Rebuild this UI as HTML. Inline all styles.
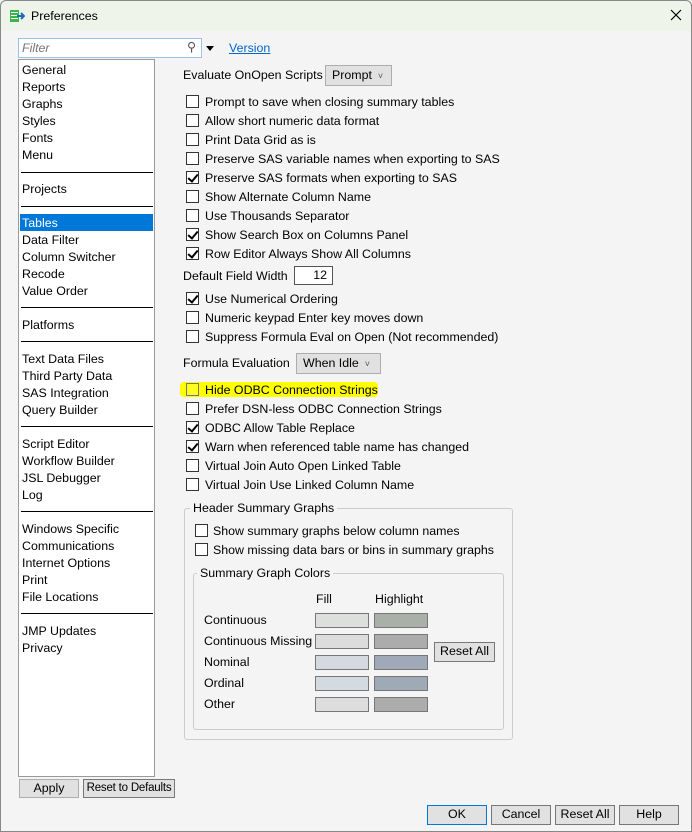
<!DOCTYPE html>
<html><head><style>
*{margin:0;padding:0;box-sizing:border-box}
body{width:692px;height:832px;background:#f4f4f4;font-family:"Liberation Sans",sans-serif;font-size:12.4px;color:#000;position:relative;overflow:hidden}
.a{position:absolute;white-space:nowrap}
.t{position:absolute;white-space:nowrap;line-height:14px}
.cb{position:absolute;width:13px;height:13px;border:1px solid #333;background:#fff}
.cb.c::after{content:"";position:absolute;left:3px;top:0px;width:4px;height:8px;border:solid #000;border-width:0 2px 2px 0;transform:rotate(40deg)}
.btn{position:absolute;background:#e1e1e1;border:1px solid #adadad;text-align:center;line-height:17px;white-space:nowrap;overflow:hidden}
.sep{position:absolute;left:21px;width:132px;height:1px;background:#000}
.sw{position:absolute;width:54px;height:15px;border:1px solid #777}
.grp{position:absolute;border:1px solid #ccc;border-radius:3px}
.lg{position:absolute;background:#f4f4f4;padding:0 3px;line-height:14px;white-space:nowrap}
</style></head><body>
<div class="a" style="left:0;top:0;width:692px;height:31px;background:#eef4ea"></div>
<div class="a" style="left:0;top:0;width:692px;height:832px;border:1px solid #888;border-radius:6px 6px 0 0"></div>
<svg class="a" style="left:9px;top:8px" width="16" height="16"><rect x="1" y="2" width="9" height="12" fill="#3bb54a"/><rect x="2" y="4" width="7" height="1" fill="#fff"/><rect x="2" y="7" width="7" height="1" fill="#fff"/><rect x="2" y="10" width="7" height="1" fill="#fff"/><path d="M8 8 L15 8 M12 5 L15 8 L12 11" stroke="#1a6fb8" stroke-width="2" fill="none"/></svg>
<div class="t" style="left:31px;top:9px">Preferences</div>
<svg class="a" style="left:670px;top:9px" width="12" height="12"><path d="M1 1 L11 11 M11 1 L1 11" stroke="#000" stroke-width="1.2"/></svg>

<div class="a" style="left:18px;top:38px;width:184px;height:20px;background:#fff;border:1px solid #99c4e8"></div>
<div class="t" style="left:22px;top:41px;color:#777;font-style:italic">Filter</div>
<div class="t" style="left:187px;top:40px;color:#555">⚲</div>
<div class="a" style="left:206px;top:46px;border-left:4px solid transparent;border-right:4px solid transparent;border-top:5px solid #000"></div>
<div class="t" style="left:229px;top:41px;color:#0066cc;text-decoration:underline">Version</div>

<div class="a" style="left:18px;top:59px;width:137px;height:718px;background:#fff;border:1px solid #999"></div>
<div class="a" style="left:20px;top:214px;width:133px;height:17px;background:#0078d7"></div>
<div class="t" style="left:22px;top:63px">General</div>
<div class="t" style="left:22px;top:80px">Reports</div>
<div class="t" style="left:22px;top:97px">Graphs</div>
<div class="t" style="left:22px;top:114px">Styles</div>
<div class="t" style="left:22px;top:131px">Fonts</div>
<div class="t" style="left:22px;top:148px">Menu</div>
<div class="sep" style="top:172px"></div>
<div class="t" style="left:22px;top:182px">Projects</div>
<div class="sep" style="top:206px"></div>
<div class="t" style="left:22px;top:216px;color:#fff">Tables</div>
<div class="t" style="left:22px;top:233px">Data Filter</div>
<div class="t" style="left:22px;top:250px">Column Switcher</div>
<div class="t" style="left:22px;top:267px">Recode</div>
<div class="t" style="left:22px;top:284px">Value Order</div>
<div class="sep" style="top:307px"></div>
<div class="t" style="left:22px;top:318px">Platforms</div>
<div class="sep" style="top:341px"></div>
<div class="t" style="left:22px;top:352px">Text Data Files</div>
<div class="t" style="left:22px;top:369px">Third Party Data</div>
<div class="t" style="left:22px;top:386px">SAS Integration</div>
<div class="t" style="left:22px;top:403px">Query Builder</div>
<div class="sep" style="top:426px"></div>
<div class="t" style="left:22px;top:437px">Script Editor</div>
<div class="t" style="left:22px;top:454px">Workflow Builder</div>
<div class="t" style="left:22px;top:471px">JSL Debugger</div>
<div class="t" style="left:22px;top:488px">Log</div>
<div class="sep" style="top:511px"></div>
<div class="t" style="left:22px;top:522px">Windows Specific</div>
<div class="t" style="left:22px;top:539px">Communications</div>
<div class="t" style="left:22px;top:556px">Internet Options</div>
<div class="t" style="left:22px;top:573px">Print</div>
<div class="t" style="left:22px;top:590px">File Locations</div>
<div class="sep" style="top:613px"></div>
<div class="t" style="left:22px;top:624px">JMP Updates</div>
<div class="t" style="left:22px;top:641px">Privacy</div>

<div class="btn" style="left:19px;top:779px;width:60px;height:19px">Apply</div>
<div class="btn" style="left:83px;top:779px;width:92px;height:19px;border-color:#777;font-size:11.5px;letter-spacing:-0.2px">Reset to Defaults</div>

<div class="t" style="left:183px;top:68px">Evaluate OnOpen Scripts</div>
<div class="btn" style="left:325px;top:65px;width:67px;height:21px;text-align:left;padding-left:6px;line-height:19px">Prompt <span style="font-size:9px;color:#555">&nbsp;˅</span></div>

<div class="cb" style="left:186px;top:95px"></div><div class="t" style="left:205px;top:95px">Prompt to save when closing summary tables</div>
<div class="cb" style="left:186px;top:114px"></div><div class="t" style="left:205px;top:114px">Allow short numeric data format</div>
<div class="cb" style="left:186px;top:133px"></div><div class="t" style="left:205px;top:133px">Print Data Grid as is</div>
<div class="cb" style="left:186px;top:152px"></div><div class="t" style="left:205px;top:152px">Preserve SAS variable names when exporting to SAS</div>
<div class="cb c" style="left:186px;top:171px"></div><div class="t" style="left:205px;top:171px">Preserve SAS formats when exporting to SAS</div>
<div class="cb" style="left:186px;top:190px"></div><div class="t" style="left:205px;top:190px">Show Alternate Column Name</div>
<div class="cb" style="left:186px;top:209px"></div><div class="t" style="left:205px;top:209px">Use Thousands Separator</div>
<div class="cb c" style="left:186px;top:228px"></div><div class="t" style="left:205px;top:228px">Show Search Box on Columns Panel</div>
<div class="cb c" style="left:186px;top:247px"></div><div class="t" style="left:205px;top:247px">Row Editor Always Show All Columns</div>

<div class="t" style="left:183px;top:269px">Default Field Width</div>
<div class="a" style="left:294px;top:266px;width:39px;height:19px;background:#fff;border:1px solid #555;text-align:right;padding-right:5px;line-height:17px">12</div>

<div class="cb c" style="left:186px;top:292px"></div><div class="t" style="left:205px;top:292px">Use Numerical Ordering</div>
<div class="cb" style="left:186px;top:311px"></div><div class="t" style="left:205px;top:311px">Numeric keypad Enter key moves down</div>
<div class="cb" style="left:186px;top:330px"></div><div class="t" style="left:205px;top:330px">Suppress Formula Eval on Open (Not recommended)</div>

<div class="t" style="left:183px;top:356px">Formula Evaluation</div>
<div class="btn" style="left:296px;top:353px;width:85px;height:21px;text-align:left;padding-left:6px;line-height:19px">When Idle <span style="font-size:9px;color:#555">&nbsp;˅</span></div>

<div class="a" style="left:180px;top:382px;width:198px;height:15px;background:#ffff00;border-radius:4px"></div>
<div class="cb" style="left:186px;top:383px;background:#ffff20;border-color:#777"></div><div class="t" style="left:205px;top:383px">Hide ODBC Connection Strings</div>
<div class="cb" style="left:186px;top:402px"></div><div class="t" style="left:205px;top:402px">Prefer DSN-less ODBC Connection Strings</div>
<div class="cb c" style="left:186px;top:421px"></div><div class="t" style="left:205px;top:421px">ODBC Allow Table Replace</div>
<div class="cb c" style="left:186px;top:440px"></div><div class="t" style="left:205px;top:440px">Warn when referenced table name has changed</div>
<div class="cb" style="left:186px;top:459px"></div><div class="t" style="left:205px;top:459px">Virtual Join Auto Open Linked Table</div>
<div class="cb" style="left:186px;top:478px"></div><div class="t" style="left:205px;top:478px">Virtual Join Use Linked Column Name</div>

<div class="grp" style="left:184px;top:508px;width:329px;height:232px"></div>
<div class="lg" style="left:190px;top:501px">Header Summary Graphs</div>
<div class="cb" style="left:195px;top:524px"></div><div class="t" style="left:213px;top:524px">Show summary graphs below column names</div>
<div class="cb" style="left:195px;top:543px"></div><div class="t" style="left:213px;top:543px">Show missing data bars or bins in summary graphs</div>

<div class="grp" style="left:193px;top:573px;width:311px;height:157px"></div>
<div class="lg" style="left:197px;top:566px">Summary Graph Colors</div>
<div class="t" style="left:316px;top:592px">Fill</div>
<div class="t" style="left:375px;top:592px">Highlight</div>
<div class="t" style="left:204px;top:613px">Continuous</div>
<div class="t" style="left:204px;top:634px">Continuous Missing</div>
<div class="t" style="left:204px;top:655px">Nominal</div>
<div class="t" style="left:204px;top:676px">Ordinal</div>
<div class="t" style="left:204px;top:697px">Other</div>
<div class="sw" style="left:315px;top:613px;background:#dcdfdc"></div><div class="sw" style="left:374px;top:613px;background:#a9b0a7"></div>
<div class="sw" style="left:315px;top:634px;background:#dcdcdc"></div><div class="sw" style="left:374px;top:634px;background:#acacac"></div>
<div class="sw" style="left:315px;top:655px;background:#d5dae1"></div><div class="sw" style="left:374px;top:655px;background:#9fa9b8"></div>
<div class="sw" style="left:315px;top:676px;background:#d3dbe1"></div><div class="sw" style="left:374px;top:676px;background:#9eabb7"></div>
<div class="sw" style="left:315px;top:697px;background:#dddddd"></div><div class="sw" style="left:374px;top:697px;background:#acacac"></div>
<div class="btn" style="left:434px;top:642px;width:61px;height:20px;border-color:#777">Reset All</div>

<div class="btn" style="left:427px;top:805px;width:60px;height:20px;border:1px solid #0078d7">OK</div>
<div class="btn" style="left:491px;top:805px;width:60px;height:20px;border-color:#777">Cancel</div>
<div class="btn" style="left:555px;top:805px;width:60px;height:20px;border-color:#777">Reset All</div>
<div class="btn" style="left:619px;top:805px;width:60px;height:20px;border-color:#777">Help</div>
</body></html>
